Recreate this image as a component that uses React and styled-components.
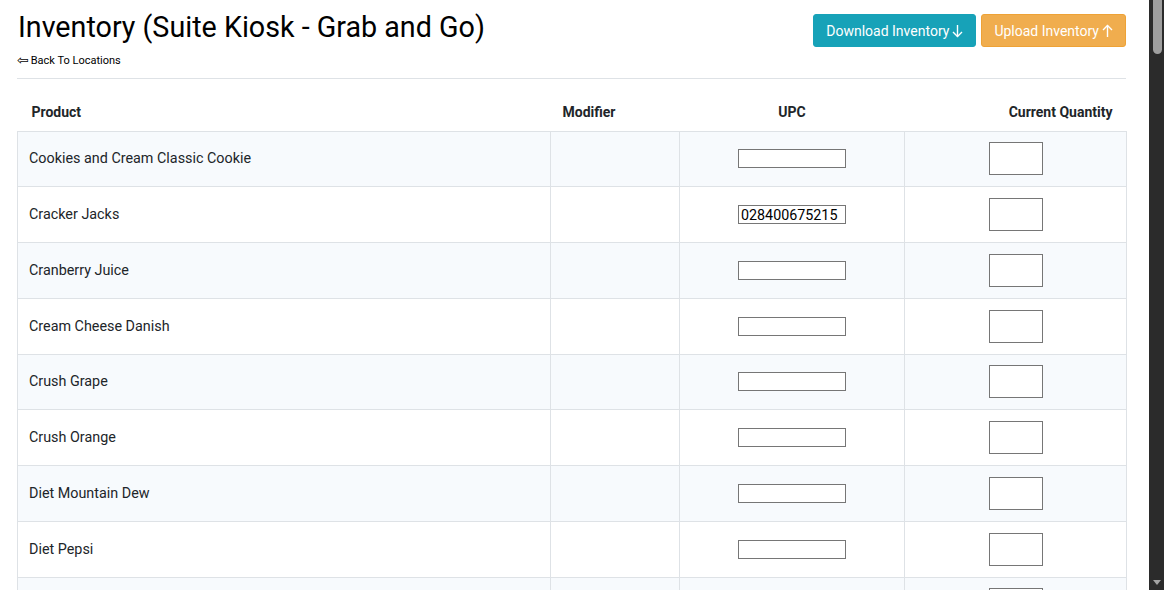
import React from "react";
import styled, { createGlobalStyle } from "styled-components";

const GlobalStyle = createGlobalStyle`
  html, body {
    margin: 0;
    padding: 0;
    background: #ffffff;
    overflow: hidden;
  }
  body {
    font-family: Roboto, "Liberation Sans", sans-serif;
    color: #212529;
  }
`;

const Screen = styled.div`
  display: flex;
  height: 100vh;
`;

const Viewport = styled.div`
  flex: 1;
  min-width: 0;
  overflow: hidden;
`;

const ScrollTrack = styled.aside`
  width: 15px;
  flex: none;
  display: flex;
  flex-direction: column;
  justify-content: space-between;
  align-items: center;
  background: #2b2b2b;
`;

const ScrollThumb = styled.div`
  width: 9px;
  height: 54px;
  margin-left: 1px;
  background: #9f9f9f;
  border-radius: 0 0 5px 5px;
`;

const ScrollArrow = styled.div`
  width: 0;
  height: 0;
  margin: 0 0 5px 1px;
  border-left: 4px solid transparent;
  border-right: 4px solid transparent;
  border-top: 5px solid #a3a3a3;
`;

const Page = styled.main`
  padding: 7px 23px 0 17px;
`;

const TopBar = styled.div`
  display: flex;
  justify-content: space-between;
  align-items: flex-start;
  padding-bottom: 11px;
  border-bottom: 1px solid #dee2e6;
`;

const TitleBlock = styled.div`
  display: flex;
  flex-direction: column;
`;

const Title = styled.h1`
  margin: 2px 0 0 1px;
  font-size: 28.7px;
  font-weight: 400;
  line-height: 36px;
  color: #000;
`;

const BackLink = styled.a`
  margin-top: 9px;
  display: flex;
  align-items: center;
  gap: 2px;
  font-size: 11px;
  line-height: 13px;
  color: #000;
  text-decoration: none;
  cursor: pointer;
`;

const BackArrow = styled.span`
  font-family: "DejaVu Sans", sans-serif;
  font-size: 14px;
  line-height: 13px;
`;

const Actions = styled.div`
  display: flex;
  gap: 5px;
  margin-top: 7px;
`;

const ActionButton = styled.button`
  display: flex;
  align-items: center;
  gap: 3px;
  height: 33px;
  padding: 0 12px;
  font-family: Roboto, "Liberation Sans", sans-serif;
  font-size: 14px;
  color: #fff;
  background: ${({ tone }) => (tone === "upload" ? "#f0ad4e" : "#17a2b8")};
  border: 1px solid ${({ tone }) => (tone === "upload" ? "#eea236" : "#17a2b8")};
  border-radius: 3px;
  cursor: pointer;
`;

const Table = styled.table`
  width: 1109px;
  margin-top: 11px;
  border-collapse: collapse;
  table-layout: fixed;
  font-size: 14px;
`;

const HeadCell = styled.th`
  height: 41px;
  padding: 3px 14px 0 ${({ pl }) => pl || "14px"};
  box-sizing: border-box;
  font-weight: 700;
  color: #212529;
  text-align: ${({ align }) => align || "left"};
  vertical-align: middle;
`;

const Row = styled.tr`
  background: ${({ striped }) => (striped ? "#f7fafd" : "#ffffff")};
`;

const Cell = styled.td`
  height: 55.75px;
  box-sizing: border-box;
  padding: 0 11px;
  border: 1px solid #dee2e6;
  font-size: 14.35px;
  text-align: ${({ align }) => align || "left"};
  vertical-align: middle;
  color: #212529;
`;

const UpcInput = styled.input`
  width: 108px;
  height: 19px;
  box-sizing: border-box;
  padding: 0 2px;
  font-family: Roboto, "Liberation Sans", sans-serif;
  font-size: 14.3px;
  line-height: 17px;
  color: #000;
  background: #fff;
  border: 1px solid #767676;
  border-radius: 0;
  display: block;
  margin: 0 auto;
`;

const QtyInput = styled.input`
  width: 54px;
  height: 33px;
  box-sizing: border-box;
  background: #fff;
  border: 1px solid #767676;
  border-radius: 0;
  display: block;
  margin: 0 auto;
`;

const Arrow = ({ up }) => (
  <svg width="11" height="14" viewBox="0 0 11 14" fill="none" stroke="currentColor" strokeWidth="1.4">
    {up ? (
      <>
        <path d="M5.5 13V1.5" />
        <path d="M1 6l4.5-4.5L10 6" />
      </>
    ) : (
      <>
        <path d="M5.5 1v11.5" />
        <path d="M1 8l4.5 4.5L10 8" />
      </>
    )}
  </svg>
);

const products = [
  { name: "Cookies and Cream Classic Cookie", upc: "" },
  { name: "Cracker Jacks", upc: "028400675215" },
  { name: "Cranberry Juice", upc: "" },
  { name: "Cream Cheese Danish", upc: "" },
  { name: "Crush Grape", upc: "" },
  { name: "Crush Orange", upc: "" },
  { name: "Diet Mountain Dew", upc: "" },
  { name: "Diet Pepsi", upc: "" },
  { name: "Doritos Nacho Cheese", upc: "" },
  { name: "Dr Pepper", upc: "" },
];

const App = () => {
  return (
    <Screen>
      <GlobalStyle />
      <Viewport>
        <Page>
          <TopBar>
            <TitleBlock>
              <Title>Inventory (Suite Kiosk - Grab and Go)</Title>
              <BackLink>
                <BackArrow>⇦</BackArrow>Back To Locations
              </BackLink>
            </TitleBlock>
            <Actions>
              <ActionButton>
                Download Inventory <Arrow />
              </ActionButton>
              <ActionButton tone="upload">
                Upload Inventory <Arrow up />
              </ActionButton>
            </Actions>
          </TopBar>
          <Table>
            <colgroup>
              <col style={{ width: 533 }} />
              <col style={{ width: 129 }} />
              <col style={{ width: 225 }} />
              <col style={{ width: 222 }} />
            </colgroup>
            <thead>
              <tr>
                <HeadCell>Product</HeadCell>
                <HeadCell pl="12px">Modifier</HeadCell>
                <HeadCell align="center">UPC</HeadCell>
                <HeadCell align="right">Current Quantity</HeadCell>
              </tr>
            </thead>
            <tbody>
              {products.map(({ name, upc }, i) => (
                <Row key={name} striped={i % 2 === 0}>
                  <Cell>{name}</Cell>
                  <Cell />
                  <Cell align="center">
                    <UpcInput type="text" defaultValue={upc} />
                  </Cell>
                  <Cell align="center">
                    <QtyInput type="text" />
                  </Cell>
                </Row>
              ))}
            </tbody>
          </Table>
        </Page>
      </Viewport>
      <ScrollTrack>
        <ScrollThumb />
        <ScrollArrow />
      </ScrollTrack>
    </Screen>
  );
};

export default App;
